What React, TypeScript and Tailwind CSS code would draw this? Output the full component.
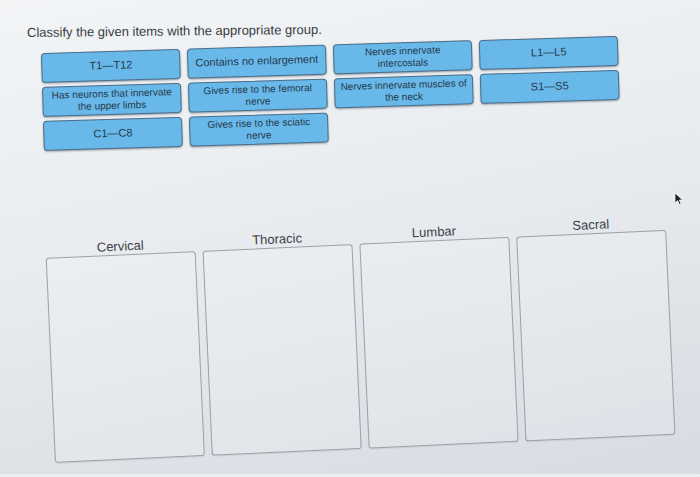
import React from 'react';

type Chip = { lines: string[] };

const chips: Chip[] = [
  { lines: ['T1—T12'] },
  { lines: ['Contains no enlargement'] },
  { lines: ['Nerves innervate', 'intercostals'] },
  { lines: ['L1—L5'] },
  { lines: ['Has neurons that innervate', 'the upper limbs'] },
  { lines: ['Gives rise to the femoral', 'nerve'] },
  { lines: ['Nerves innervate muscles of', 'the neck'] },
  { lines: ['S1—S5'] },
  { lines: ['C1—C8'] },
  { lines: ['Gives rise to the sciatic', 'nerve'] },
];

const groups = ['Cervical', 'Thoracic', 'Lumbar', 'Sacral'];

const DragChip: React.FC<{ chip: Chip }> = ({ chip }) => {
  const single = chip.lines.length === 1;
  return (
    <div
      className={`h-[30px] flex flex-col items-center justify-center rounded-[4px] border border-[#4a6e89] bg-[#68b8ea] shadow-[0_1px_2px_rgba(20,40,60,0.4)] text-[#263a4b] text-center ${
        single ? 'pb-[2px]' : 'pb-[1px]'
      }`}
    >
      {chip.lines.map((line) => (
        <span
          key={line}
          className={single ? 'text-[11px] leading-[13px]' : 'text-[10px] leading-[12px]'}
        >
          {line}
        </span>
      ))}
    </div>
  );
};

const Cursor = () => (
  <svg width="10" height="13" viewBox="0 0 10 13" className="absolute left-[674px] top-[192px]">
    <path d="M1 1 L1 11 L3.6 8.6 L5.4 12.4 L7 11.7 L5.3 8 L8.6 8 Z" fill="#1b1d20" stroke="#f4f6f8" strokeWidth="0.8" />
  </svg>
);

export default function App() {
  return (
    <div className="relative w-[700px] h-[477px] overflow-hidden flex flex-col bg-[linear-gradient(168deg,#f2f4f6_0%,#eaedf0_40%,#dfe3e8_75%,#d6dce2_100%)] [font-family:'Liberation_Sans',Arial,sans-serif]">
      <div className="flex-1 flex flex-col pt-[25px]">
        <h1 className="ml-[27px] text-[13px] leading-[15px] font-normal text-[#383d42] -rotate-[0.6deg] origin-left">
          Classify the given items with the appropriate group.
        </h1>

        <div className="mt-[13px] ml-[41px] grid grid-cols-[repeat(4,139px)] gap-x-[7px] gap-y-[4px] w-max -rotate-[1.7deg] origin-top-left">
          {chips.map((chip) => (
            <DragChip key={chip.lines.join(' ')} chip={chip} />
          ))}
        </div>

        <div className="mt-[91px] ml-[45px] flex gap-[7px] w-max -rotate-[2.6deg] origin-top-left">
          {groups.map((name) => (
            <div key={name} className="flex flex-col items-center">
              <span className="text-[13px] leading-[15px] mb-[1px] text-[#3c4146]">{name}</span>
              <div className="w-[150px] h-[205px] rounded-[3px] border border-[#9ca1a7] bg-white/15 shadow-[0_1px_1px_rgba(0,0,0,0.08)]" />
            </div>
          ))}
        </div>
      </div>
      <div className="h-[3px] bg-[#eceef0]" />
      <Cursor />
    </div>
  );
}
